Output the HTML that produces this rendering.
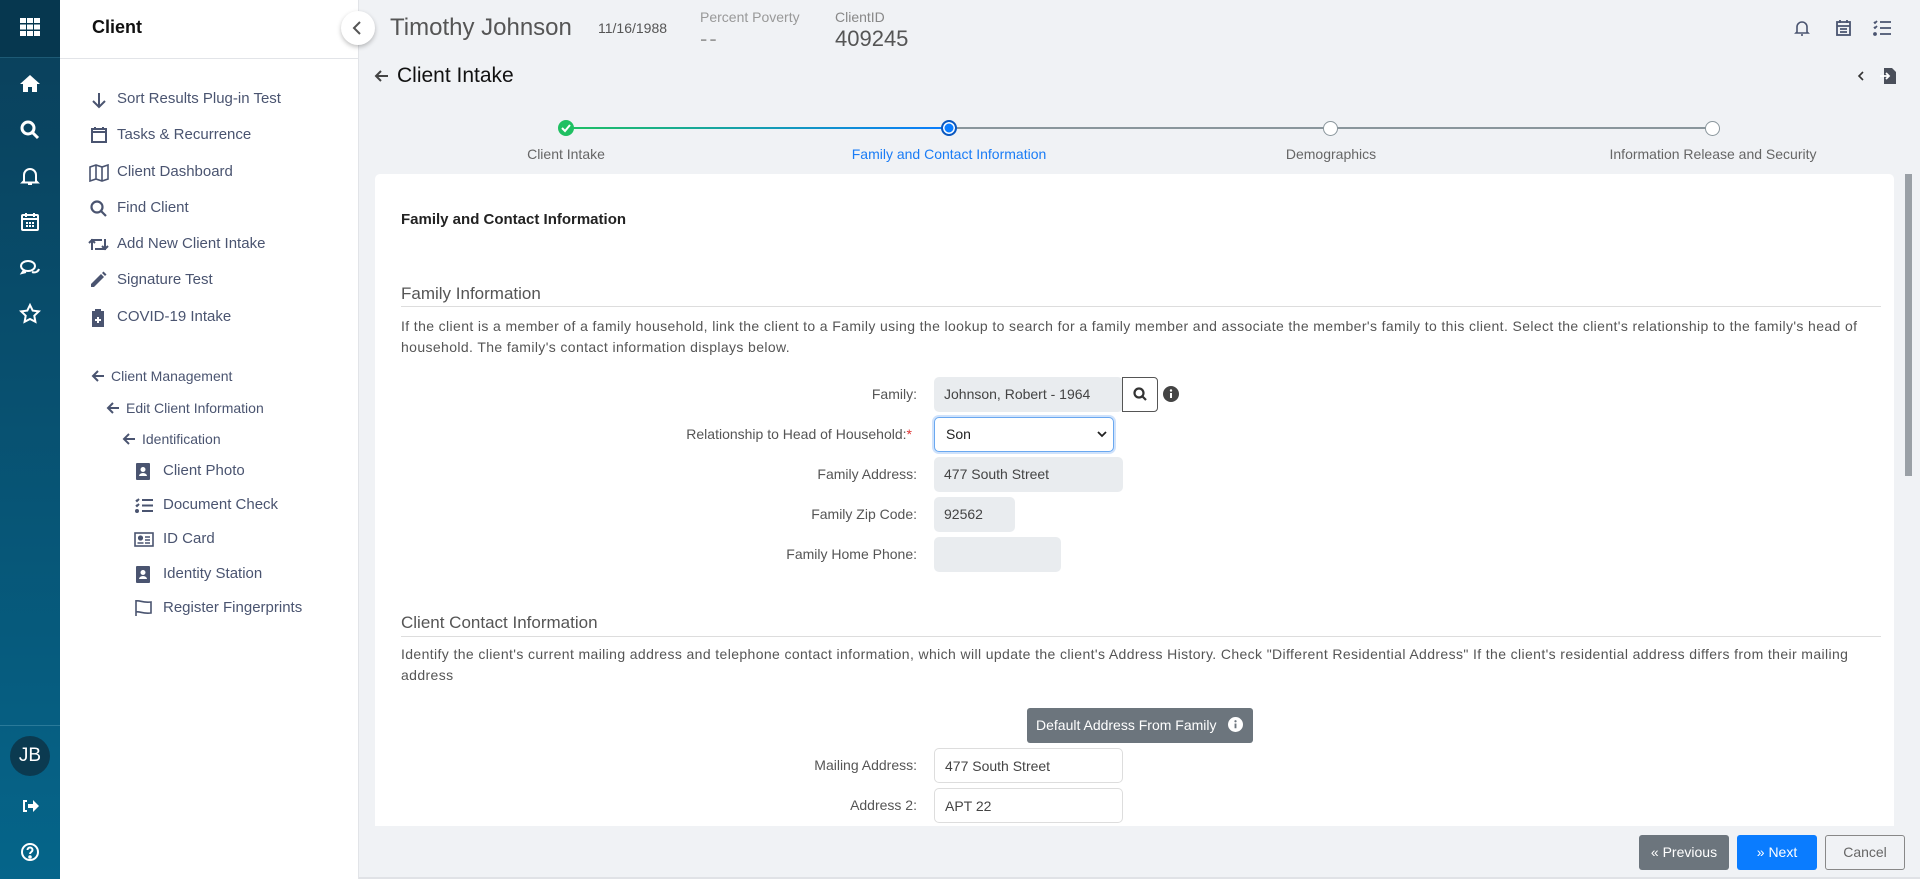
<!DOCTYPE html>
<html><head><meta charset="utf-8"><style>
*{box-sizing:border-box;margin:0;padding:0}
body{width:1920px;height:879px;overflow:hidden;font-family:"Liberation Sans",sans-serif;background:#f0f2f5;position:relative;color:#333}
.abs{position:absolute}
#rail{left:0;top:0;width:60px;height:879px;background:linear-gradient(#0a3f5a,#05658a);}
#rail .top{height:58px;background:#06374f;border-bottom:1px solid #1d5a75}
.ri{position:absolute;left:18px;width:24px;height:24px}
#side{left:60px;top:0;width:299px;height:879px;background:#fff;border-right:1px solid #e2e4e8}
.si{position:absolute;font-size:15px;color:#4a5470;white-space:nowrap}
.si svg{position:absolute}
.lbl{position:absolute;font-size:14px;color:#555;text-align:right;width:300px}
.inp{position:absolute;height:35px;border-radius:5px;background:#e9ecef;font-size:14px;color:#444;padding:9px 10px}
.step{position:absolute;top:121px;width:15px;height:15px;border-radius:50%;border:1.5px solid #8a969c;background:#fff}
.sl{position:absolute;top:146px;font-size:14px;color:#666;text-align:center;width:300px}
.para{font-size:14px;color:#555;line-height:21px;letter-spacing:.38px}
</style></head><body>
<div id="rail" class="abs"><div class="top"></div>
<svg class="ri" style="top:15px" viewBox="0 0 24 24" fill="#fff"><rect x="2" y="3" width="6" height="5"/><rect x="9" y="3" width="6" height="5"/><rect x="16" y="3" width="6" height="5"/><rect x="2" y="9.5" width="6" height="5"/><rect x="9" y="9.5" width="6" height="5"/><rect x="16" y="9.5" width="6" height="5"/><rect x="2" y="16" width="6" height="5"/><rect x="9" y="16" width="6" height="5"/><rect x="16" y="16" width="6" height="5"/></svg>
<svg class="ri" style="top:72px" viewBox="0 0 24 24" fill="#fff"><path d="M12 3L2 12h3v8h5v-5h4v5h5v-8h3z"/></svg>
<svg class="ri" style="top:118px" viewBox="0 0 24 24" fill="none" stroke="#fff" stroke-width="3"><circle cx="10" cy="10" r="6"/><path d="M15 15l5 5"/></svg>
<svg class="ri" style="top:164px" viewBox="0 0 24 24" fill="none" stroke="#fff" stroke-width="2"><path d="M6 17V11a6 6 0 0112 0v6l1.5 1.5h-15z"/><path d="M10 20h4"/></svg>
<svg class="ri" style="top:210px" viewBox="0 0 24 24" fill="none" stroke="#fff" stroke-width="2"><rect x="4" y="5" width="16" height="15" rx="1"/><path d="M4 9h16M8 3v4M16 3v4M8 13h2M11 13h2M14 13h2M8 16h2M11 16h2M14 16h2"/></svg>
<svg class="ri" style="top:256px" viewBox="0 0 24 24" fill="none" stroke="#fff" stroke-width="2"><ellipse cx="10" cy="10" rx="7" ry="5"/><path d="M14 16c3 1 6 0 7-3M6 14l-2 3 4-1"/></svg>
<svg class="ri" style="top:302px" viewBox="0 0 24 24" fill="none" stroke="#fff" stroke-width="2"><path d="M12 3l2.7 5.6 6.1.8-4.5 4.3 1.1 6.1L12 17l-5.4 2.8 1.1-6.1-4.5-4.3 6.1-.8z"/></svg>
<div class="abs" style="left:0;top:725px;width:60px;border-top:1px solid #2a7a99"></div>
<div class="abs" style="left:10px;top:736px;width:40px;height:40px;border-radius:50%;background:#0b3a50;color:#fff;font-size:19px;text-align:center;line-height:40px">JB</div>
<svg class="ri" style="top:794px" viewBox="0 0 24 24" fill="#fff"><path d="M9 6H5v12h4v-2H7V8h2z"/><path d="M10 10h5V6l6 6-6 6v-4h-5z"/></svg>
<svg class="ri" style="top:840px" viewBox="0 0 24 24" fill="none" stroke="#fff" stroke-width="2"><circle cx="12" cy="12" r="8"/><path d="M9.5 10a2.5 2.5 0 115 0c0 2-2.5 2-2.5 4"/><circle cx="12" cy="17" r=".8" fill="#fff"/></svg>
</div>
<div id="side" class="abs">
<div class="abs" style="left:32px;top:17px;font-size:18px;color:#111;font-weight:bold">Client</div>
<div class="abs" style="left:0;top:58px;width:299px;border-top:1px solid #e2e4e8"></div>
<div class="si" style="left:57px;top:90px"><svg style="left:-27px;top:1px" width="18" height="18" viewBox="0 0 18 18" fill="none" stroke="#4a5470" stroke-width="2"><path d="M9 2v14M3 10l6 6 6-6"/></svg>Sort Results Plug-in Test</div>
<div class="si" style="left:57px;top:126px"><svg style="left:-27px;top:0" width="18" height="18" viewBox="0 0 18 18" fill="none" stroke="#4a5470" stroke-width="2"><rect x="2" y="3" width="14" height="13"/><path d="M2 6h14M5 1v3M13 1v3"/></svg>Tasks &amp; Recurrence</div>
<div class="si" style="left:57px;top:163px"><svg style="left:-28px;top:1px" width="20" height="18" viewBox="0 0 20 18" fill="none" stroke="#4a5470" stroke-width="1.6"><path d="M1 3l6-2 6 2 6-2v14l-6 2-6-2-6 2zM7 1v14M13 3v14"/></svg>Client Dashboard</div>
<div class="si" style="left:57px;top:199px"><svg style="left:-28px;top:0" width="19" height="19" viewBox="0 0 19 19" fill="none" stroke="#4a5470" stroke-width="2.2"><circle cx="8" cy="8" r="5.5"/><path d="M12 12l5 5"/></svg>Find Client</div>
<div class="si" style="left:57px;top:235px"><svg style="left:-29px;top:1px" width="21" height="17" viewBox="0 0 21 17" fill="none" stroke="#4a5470" stroke-width="2"><path d="M4 14V4h10M1 7l3-3 3 3M17 3v10H7M14 10l3 3 3-3"/></svg>Add New Client Intake</div>
<div class="si" style="left:57px;top:271px"><svg style="left:-28px;top:0" width="18" height="18" viewBox="0 0 18 18" fill="#4a5470"><path d="M2 13l10-10 3 3-10 10H2z"/><path d="M13 2l1.5-1.5 3 3L16 5z"/></svg>Signature Test</div>
<div class="si" style="left:57px;top:308px"><svg style="left:-26px;top:0" width="14" height="19" viewBox="0 0 14 19" fill="#4a5470"><path d="M1 3h3V1h6v2h3v16H1z"/><path d="M6 9h2v2h2v2H8v2H6v-2H4v-2h2z" fill="#fff"/></svg>COVID-19 Intake</div>
<div class="si" style="left:51px;top:368px;font-size:14px"><svg style="left:-20px;top:1px" width="14" height="14" viewBox="0 0 14 14" fill="none" stroke="#4a5470" stroke-width="2"><path d="M13 7H2M7 2L2 7l5 5"/></svg>Client Management</div>
<div class="si" style="left:66px;top:400px;font-size:14px"><svg style="left:-20px;top:1px" width="14" height="14" viewBox="0 0 14 14" fill="none" stroke="#4a5470" stroke-width="2"><path d="M13 7H2M7 2L2 7l5 5"/></svg>Edit Client Information</div>
<div class="si" style="left:82px;top:431px;font-size:14px"><svg style="left:-20px;top:1px" width="14" height="14" viewBox="0 0 14 14" fill="none" stroke="#4a5470" stroke-width="2"><path d="M13 7H2M7 2L2 7l5 5"/></svg>Identification</div>
<div class="si" style="left:103px;top:462px"><svg style="left:-27px;top:1px" width="14" height="17" viewBox="0 0 14 17" fill="#4a5470"><rect width="14" height="17" rx="1"/><circle cx="7" cy="6.5" r="2.5" fill="#fff"/><path d="M3 13a4 3 0 018 0z" fill="#fff"/></svg>Client Photo</div>
<div class="si" style="left:103px;top:496px"><svg style="left:-28px;top:2px" width="18" height="15" viewBox="0 0 18 15" fill="none" stroke="#4a5470" stroke-width="2"><path d="M7 2h11M7 7.5h11M7 13h11M1 2l1 1 2-2M1 7l1 1 2-2"/><circle cx="2" cy="13" r="1" fill="#4a5470"/></svg>Document Check</div>
<div class="si" style="left:103px;top:530px"><svg style="left:-29px;top:2px" width="20" height="15" viewBox="0 0 20 15" fill="none" stroke="#4a5470" stroke-width="1.6"><rect x="1" y="1" width="18" height="13"/><circle cx="6.5" cy="6" r="1.8" fill="#4a5470"/><path d="M3.5 11h6M11 5h5M11 8h5M11 11h5"/></svg>ID Card</div>
<div class="si" style="left:103px;top:565px"><svg style="left:-27px;top:1px" width="14" height="17" viewBox="0 0 14 17" fill="#4a5470"><rect width="14" height="17" rx="1"/><circle cx="7" cy="6.5" r="2.5" fill="#fff"/><path d="M3 13a4 3 0 018 0z" fill="#fff"/></svg>Identity Station</div>
<div class="si" style="left:103px;top:599px"><svg style="left:-29px;top:0" width="19" height="18" viewBox="0 0 19 18" fill="none" stroke="#4a5470" stroke-width="1.6"><path d="M2 1v16M2 2c4-1 6 2 15 1v11c-9 1-11-2-15-1"/></svg>Register Fingerprints</div>
</div>
<div class="abs" style="left:341px;top:11px;width:34px;height:34px;border-radius:50%;background:#fff;box-shadow:0 2px 5px rgba(0,0,0,.25)"><svg width="34" height="34" viewBox="0 0 34 34" fill="none" stroke="#555" stroke-width="2"><path d="M19 11l-6 6 6 6"/></svg></div>
<div class="abs" style="left:390px;top:14px;font-size:24px;color:#555">Timothy Johnson</div>
<div class="abs" style="left:598px;top:20px;font-size:14px;color:#555">11/16/1988</div>
<div class="abs" style="left:700px;top:9px;font-size:14px;color:#999">Percent Poverty</div>
<div class="abs" style="left:700px;top:26px;font-size:22px;color:#999;letter-spacing:2px">--</div>
<div class="abs" style="left:835px;top:9px;font-size:14px;color:#888">ClientID</div>
<div class="abs" style="left:835px;top:26px;font-size:22px;color:#555">409245</div>
<svg class="abs" style="left:1793px;top:19px" width="18" height="18" viewBox="0 0 18 18" fill="none" stroke="#4a5470" stroke-width="1.6"><path d="M4 13V8a5 5 0 0110 0v5l1 1H3z"/><path d="M8 16h2"/></svg>
<svg class="abs" style="left:1835px;top:19px" width="17" height="18" viewBox="0 0 17 18" fill="none" stroke="#4a5470" stroke-width="1.8"><rect x="2" y="3" width="13" height="13"/><path d="M2 7h13M5 1v3M12 1v3M5 10h7M5 13h7"/></svg>
<svg class="abs" style="left:1873px;top:20px" width="18" height="16" viewBox="0 0 18 16" fill="none" stroke="#4a5470" stroke-width="1.8"><path d="M7 2h11M7 8h11M7 14h11M1 2l1 1 2-2M1 7l1 1 2-2"/><circle cx="2" cy="14" r="1" fill="#4a5470"/></svg>
<svg class="abs" style="left:374px;top:68px" width="16" height="16" viewBox="0 0 16 16" fill="none" stroke="#444" stroke-width="2"><path d="M14 8H2M7 3L2 8l5 5"/></svg>
<div class="abs" style="left:397px;top:64px;font-size:21px;color:#111">Client Intake</div>
<svg class="abs" style="left:1856px;top:70px" width="10" height="12" viewBox="0 0 10 12" fill="none" stroke="#333" stroke-width="1.6"><path d="M7 2L3 6l4 4"/></svg>
<svg class="abs" style="left:1880px;top:68px" width="16" height="16" viewBox="0 0 16 16"><path d="M4 0h8l4 4v12H4z" fill="#4a4f5a"/><path d="M0 8h9M6 5l3 3-3 3" stroke="#fff" stroke-width="1.8" fill="none"/></svg>
<div class="abs" style="left:566px;top:127px;width:383px;height:2px;background:linear-gradient(90deg,#1fc062,#0a7cff)"></div>
<div class="abs" style="left:949px;top:127px;width:764px;height:2px;background:#8a969c"></div>
<div class="abs" style="left:558px;top:120px;width:16px;height:16px;border-radius:50%;background:#1fc062"><svg width="16" height="16" viewBox="0 0 16 16" fill="none" stroke="#fff" stroke-width="2"><path d="M4 8l3 3 5-6"/></svg></div>
<div class="abs" style="left:941px;top:120px;width:16px;height:16px;border-radius:50%;background:#0a7cff;border:2px solid #0a58c0;box-shadow:0 0 0 1.5px #fff inset"></div>
<div class="step" style="left:1323px"></div><div class="step" style="left:1705px"></div>
<div class="sl" style="left:416px">Client Intake</div>
<div class="sl" style="left:799px;color:#1a7cf5">Family and Contact Information</div>
<div class="sl" style="left:1181px">Demographics</div>
<div class="sl" style="left:1563px">Information Release and Security</div>
<div class="abs" style="left:375px;top:174px;width:1519px;height:652px;background:#fff;border-radius:5px 5px 0 0"></div>
<div class="abs" style="left:1905px;top:174px;width:7px;height:302px;background:#9aa0a6"></div>
<div class="abs" style="left:401px;top:211px;font-size:15px;font-weight:bold;color:#222">Family and Contact Information</div>
<div class="abs" style="left:401px;top:284px;font-size:17px;color:#555">Family Information</div>
<div class="abs" style="left:401px;top:306px;width:1480px;border-top:1px solid #ddd"></div>
<div class="abs para" style="left:401px;top:316px;width:1480px">If the client is a member of a family household, link the client to a Family using the lookup to search for a family member and associate the member's family to this client. Select the client's relationship to the family's head of household. The family's contact information displays below.</div>
<div class="lbl" style="left:617px;top:386px">Family:</div>
<div class="inp" style="left:934px;top:377px;width:189px">Johnson, Robert - 1964</div>
<div class="abs" style="left:1122px;top:377px;width:36px;height:35px;border:1px solid #555;border-radius:0 4px 4px 0;background:#fff"><svg width="34" height="33" viewBox="0 0 34 33" fill="none" stroke="#333" stroke-width="2.2"><circle cx="16" cy="15" r="4.5"/><path d="M19.5 18.5l3.5 3.5"/></svg></div>
<svg class="abs" style="left:1163px;top:386px" width="16" height="16" viewBox="0 0 16 16"><circle cx="8" cy="8" r="8" fill="#444"/><rect x="7" y="7" width="2" height="5" fill="#fff"/><circle cx="8" cy="4.5" r="1.2" fill="#fff"/></svg>
<div class="lbl" style="left:612px;top:426px">Relationship to Head of Household:<span style="color:#d33">*</span></div>
<div class="abs" style="left:934px;top:417px;width:180px;height:35px;border:1.5px solid #6aa8f0;border-radius:5px;box-shadow:0 0 0 2px #cfe2fb;background:#fff;font-size:14px;padding:8px 11px;color:#222">Son<svg style="position:absolute;right:6px;top:13px" width="10" height="7" viewBox="0 0 10 7" fill="none" stroke="#222" stroke-width="1.8"><path d="M1 1l4 4 4-4"/></svg></div>
<div class="lbl" style="left:617px;top:466px">Family Address:</div>
<div class="inp" style="left:934px;top:457px;width:189px">477 South Street</div>
<div class="lbl" style="left:617px;top:506px">Family Zip Code:</div>
<div class="inp" style="left:934px;top:497px;width:81px">92562</div>
<div class="lbl" style="left:617px;top:546px">Family Home Phone:</div>
<div class="inp" style="left:934px;top:537px;width:127px"></div>
<div class="abs" style="left:401px;top:613px;font-size:17px;color:#555">Client Contact Information</div>
<div class="abs" style="left:401px;top:636px;width:1480px;border-top:1px solid #ddd"></div>
<div class="abs para" style="left:401px;top:644px;width:1480px">Identify the client's current mailing address and telephone contact information, which will update the client's Address History. Check "Different Residential Address" If the client's residential address differs from their mailing address</div>
<div class="abs" style="left:1027px;top:708px;width:226px;height:35px;background:#6c757d;border-radius:3px;color:#fff;font-size:14px;padding:9px 9px">Default Address From Family<svg style="position:absolute;right:10px;top:9px" width="15" height="15" viewBox="0 0 16 16"><circle cx="8" cy="8" r="8" fill="#fff"/><rect x="7" y="7" width="2" height="5" fill="#6c757d"/><circle cx="8" cy="4.5" r="1.2" fill="#6c757d"/></svg></div>
<div class="lbl" style="left:617px;top:757px">Mailing Address:</div>
<div class="inp" style="left:934px;top:748px;width:189px;background:#fff;border:1px solid #ddd">477 South Street</div>
<div class="lbl" style="left:617px;top:797px">Address 2:</div>
<div class="inp" style="left:934px;top:788px;width:189px;background:#fff;border:1px solid #ddd">APT 22</div>
<div class="abs" style="left:1639px;top:835px;width:90px;height:35px;background:#6c757d;border-radius:3px;color:#fff;font-size:14px;text-align:center;line-height:35px">« Previous</div>
<div class="abs" style="left:1737px;top:835px;width:80px;height:35px;background:#0a7cff;border-radius:3px;color:#fff;font-size:14px;text-align:center;line-height:35px">» Next</div>
<div class="abs" style="left:1825px;top:835px;width:80px;height:35px;border:1px solid #888;border-radius:3px;color:#666;font-size:14px;text-align:center;line-height:33px">Cancel</div>
<div class="abs" style="left:359px;top:877px;width:1561px;border-top:2px solid #e0e2e6"></div>
</body></html>
